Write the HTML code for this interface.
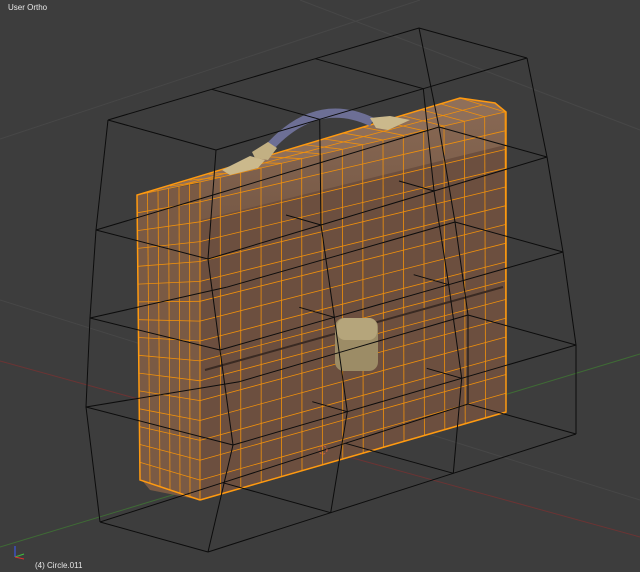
<!DOCTYPE html>
<html><head><meta charset="utf-8"><style>
html,body{margin:0;padding:0;background:#3d3d3d;width:640px;height:572px;overflow:hidden}
.t{position:absolute;font-family:"Liberation Sans",sans-serif;font-size:8px;color:#e8e8e8}
svg{position:absolute;left:0;top:0}
</style></head><body>
<svg width="640" height="572" viewBox="0 0 640 572">
<defs><linearGradient id="tg" x1="0" y1="0" x2="0" y2="1"><stop offset="0" stop-color="#8e6e58"/><stop offset="1" stop-color="#7a5c48"/></linearGradient></defs>
<g stroke="#474747" stroke-width="1" fill="none">
<line x1="0" y1="139" x2="420" y2="0"/>
<line x1="300" y1="0" x2="640" y2="130"/>
<line x1="0" y1="300" x2="640" y2="500"/>
</g>
<line x1="0" y1="361" x2="640" y2="537" stroke="#6b3434" stroke-width="1"/>
<line x1="0" y1="547" x2="640" y2="354" stroke="#3f6b35" stroke-width="1"/>
<polygon points="137,195 200,183 200,500 170,494 150,490 140,478" fill="#7a5a44"/>
<polygon points="137,195 200,182 505,112 495,103 460,98 170,186" fill="#8f6f59"/>
<polygon points="200,182 505,112 506,412 200,500" fill="#6c4f3f"/>
<polygon points="200,182 505,112 505,145 200,220" fill="url(#tg)" opacity="0.8"/>
<g id="wire" stroke="#f0900c" stroke-width="0.8" fill="none"></g>
<polyline points="200,500 506,412 506,112 495,103 460,98 137,195 140,480 200,500" stroke="#ff9a10" stroke-width="1.5" fill="none"/>
<line x1="205" y1="370" x2="503" y2="287" stroke="#3a2a22" stroke-width="2"/>
<path d="M267,150 Q315,95 372,122" stroke="#6d6f95" stroke-width="9" fill="none"/>
<polygon points="222,170 250,156 265,160 258,168 230,175" fill="#cbb98c"/>
<polygon points="252,152 268,142 277,148 268,160 255,158" fill="#c2b083"/>
<polygon points="370,118 390,116 410,120 388,130 376,128" fill="#cbb98c"/>
<rect x="335" y="318" width="43" height="53" rx="9" fill="#9c8c66"/>
<rect x="337" y="318" width="40" height="22" rx="8" fill="#b5a57b"/>
<g id="cage" stroke="#0c0c0c" stroke-width="1" fill="none"></g>
<circle cx="323" cy="450" r="4" stroke="#d06040" stroke-width="1" fill="none" stroke-dasharray="2,2"/>
<line x1="15" y1="557" x2="15" y2="546" stroke="#3a5aff" stroke-width="1"/>
<line x1="15" y1="557" x2="24" y2="554" stroke="#3fbf3f" stroke-width="1"/>
<line x1="15" y1="557" x2="24" y2="559" stroke="#e03030" stroke-width="1"/>
</svg>
<div class="t" style="left:8px;top:3px">User Ortho</div>
<div class="t" style="left:35px;top:561px">(4) Circle.011</div>
<script>
function ln(a,b){return '<line x1="'+a[0].toFixed(1)+'" y1="'+a[1].toFixed(1)+'" x2="'+b[0].toFixed(1)+'" y2="'+b[1].toFixed(1)+'"/>';}
function lp(a,b,t){return [a[0]+(b[0]-a[0])*t,a[1]+(b[1]-a[1])*t];}
var h='';
var P=[[200,182],[505,112],[506,412],[200,500]];
function B(u,v){return lp(lp(P[0],P[1],u),lp(P[3],P[2],u),v);}
var nu=15,nv=16;
for(var i=0;i<=nu;i++){var u=i/nu;h+=ln(B(u,0),B(u,1));}
for(var j=0;j<=nv;j++){var v=j/nv;h+=ln(B(0,v),B(1,v));}
var S=[[137,195],[200,182],[200,500],[140,480]];
function C(u,v){return lp(lp(S[0],S[1],u),lp(S[3],S[2],u),v);}
for(var i=0;i<=6;i++){h+=ln(C(i/6,0),C(i/6,1));}
for(var j=0;j<=16;j++){h+=ln(C(0,j/16),C(1,j/16));}
var T=[[170,186],[460,98],[505,112],[200,182]];
function D(u,v){return lp(lp(T[0],T[1],u),lp(T[3],T[2],u),v);}
for(var i=0;i<=nu;i++){h+=ln(D(i/nu,0),D(i/nu,1));}
h+=ln(D(0,0.5),D(1,0.5));
document.getElementById('wire').innerHTML=h;
var L=[[216,150],[208,259],[220,350],[233,445],[208,552]];
var R=[[527,58],[547,157],[563,252],[576,345],[576,434]];
var BL=[[108,120],[96,230],[90,318],[86,407],[100,522]];
var off=[-108,-30];
function F(c,r){return lp(L[r],R[r],c/3);}
function K(c,r){if(c==0)return BL[r];var p=F(c,r);return [p[0]+off[0],p[1]+off[1]];}
var g='';
for(var r=0;r<5;r++){for(var c=0;c<3;c++){g+=ln(F(c,r),F(c+1,r));g+=ln(K(c,r),K(c+1,r));}}
for(var c=0;c<4;c++){for(var r=0;r<4;r++){g+=ln(F(c,r),F(c,r+1));if(c==0||c==3)g+=ln(K(c,r),K(c,r+1));}}
for(var r=0;r<5;r++){for(var c=0;c<4;c++){if(r==0||r==4||c==0||c==3)g+=ln(F(c,r),K(c,r));else{var p=F(c,r);g+=ln(p,[p[0]-35,p[1]-10]);}}}
document.getElementById('cage').innerHTML=g;
</script>
</body></html>
